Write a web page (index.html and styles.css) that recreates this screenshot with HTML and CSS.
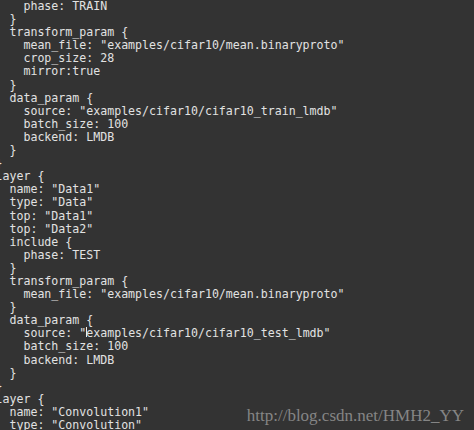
FILE: index.html
```html
<!DOCTYPE html>
<html lang="en">
<head>
<meta charset="utf-8">
<title>prototxt</title>
<link rel="stylesheet" href="styles.css">
</head>
<body>
<main class="terminal">
<pre class="code">    phase: TRAIN
  }
  transform_param {
    mean_file: "examples/cifar10/mean.binaryproto"
    crop_size: 28
    mirror:true
  }
  data_param {
    source: "examples/cifar10/cifar10_train_lmdb"
    batch_size: 100
    backend: LMDB
  }
}
layer {
  name: "Data1"
  type: "Data"
  top: "Data1"
  top: "Data2"
  include {
    phase: TEST
  }
  transform_param {
    mean_file: "examples/cifar10/mean.binaryproto"
  }
  data_param {
    source: "<span class="cursor">e</span>xamples/cifar10/cifar10_test_lmdb"
    batch_size: 100
    backend: LMDB
  }
}
layer {
  name: "Convolution1"
  type: "Convolution"</pre>
<div class="watermark">http://blog.csdn.net/HMH2_YY</div>
</main>
</body>
</html>
```
FILE: styles.css
```css
html, body {
  margin: 0;
  padding: 0;
  background: #333333;
  overflow: hidden;
  height: 430px;
}
.terminal {
  position: relative;
  height: 430px;
  overflow: hidden;
}
.code {
  margin: 0 0 0 -4.5px;
  font-family: "DejaVu Sans Mono", "Liberation Mono", monospace;
  font-size: 11.6px;
  line-height: 13.1px;
  color: #e2e2e2;
}
.cursor {
  position: relative;
}
.cursor::before {
  content: "";
  position: absolute;
  left: -0.5px;
  top: 1px;
  width: 1px;
  height: 10px;
  background: #eeeeee;
}
.watermark {
  position: absolute;
  top: 407px;
  right: 10px;
  font-family: "Liberation Serif", serif;
  font-size: 17px;
  line-height: 17px;
  color: #858585;
}
```
